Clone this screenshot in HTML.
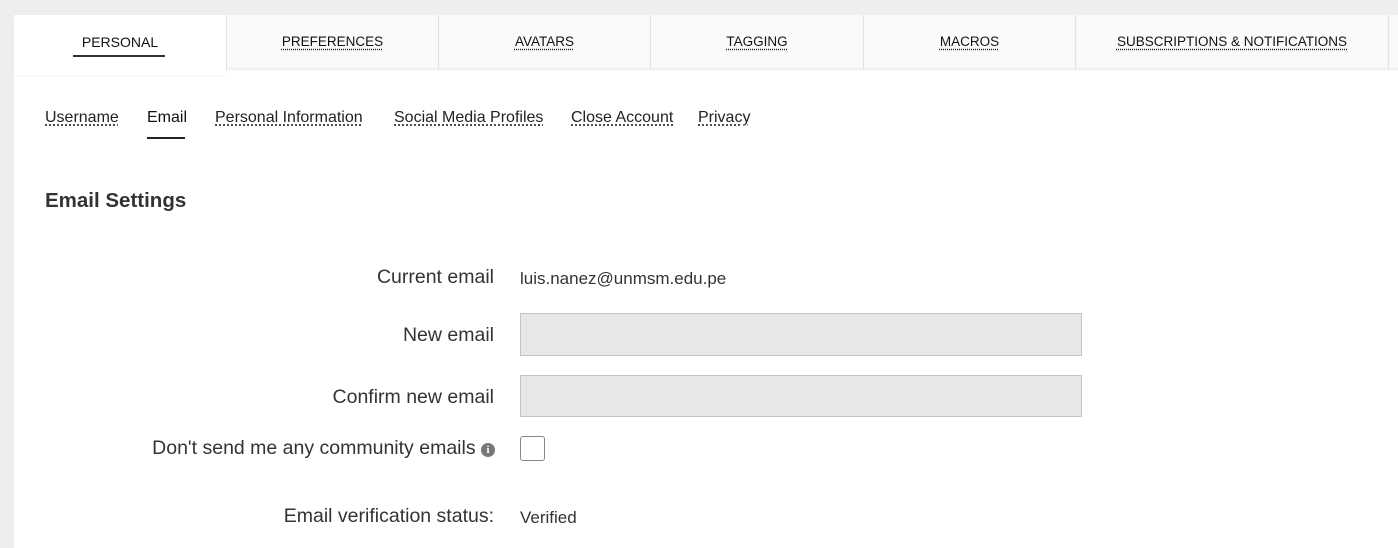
<!DOCTYPE html>
<html><head><style>
body{margin:0;width:1398px;height:548px;background:#efeeee;font-family:"Liberation Sans",sans-serif;position:relative;overflow:hidden;color:#333}
.a{position:absolute}
.tab{position:absolute;top:15px;height:55px;background:#fafafa;border-left:1px solid #e2e2e2;box-sizing:border-box;text-align:center;line-height:54px;font-size:13.5px;color:#111;box-shadow:inset 0 -3px 3px -2px #e6e6e6}
.tab span{text-decoration:underline dotted;text-underline-offset:3px}
.panel{position:absolute;left:14px;top:70px;width:1384px;height:478px;background:#fff}
.sub{position:absolute;top:109px;font-size:16px;color:#222;text-decoration:underline dotted;text-underline-offset:3px}
.lbl{position:absolute;right:904px;font-size:19.5px;color:#333;text-align:right;white-space:nowrap}
.inp{position:absolute;left:520px;width:562px;background:#e7e7e7;border:1px solid #c4c4c4;box-sizing:border-box}
</style></head><body>
<div class="panel"></div>
<div class="a" style="left:14px;top:15px;width:212px;height:60px;background:#fff;box-shadow:0 1px 3px rgba(0,0,0,.05)"></div>
<div class="a" style="left:14px;top:15px;width:212px;line-height:54px;text-align:center;font-size:14px;color:#111">PERSONAL</div>
<div class="a" style="left:73px;top:55px;width:92px;height:2px;background:#333"></div>
<div class="tab" style="left:226px;width:212px"><span>PREFERENCES</span></div>
<div class="tab" style="left:438px;width:212px"><span>AVATARS</span></div>
<div class="tab" style="left:650px;width:213px"><span>TAGGING</span></div>
<div class="tab" style="left:863px;width:212px"><span>MACROS</span></div>
<div class="tab" style="left:1075px;width:313px"><span>SUBSCRIPTIONS &amp; NOTIFICATIONS</span></div>
<div class="tab" style="left:1388px;width:20px"></div>
<div class="sub" style="left:45px">Username</div>
<div class="a" style="left:147px;top:109px;font-size:16px;color:#111">Email</div>
<div class="a" style="left:147px;top:137px;width:38px;height:2px;background:#222"></div>
<div class="sub" style="left:215px">Personal Information</div>
<div class="sub" style="left:394px">Social Media Profiles</div>
<div class="sub" style="left:571px">Close Account</div>
<div class="sub" style="left:698px">Privacy</div>
<div class="a" style="left:45px;top:189px;font-size:20.5px;font-weight:bold;color:#333">Email Settings</div>
<div class="lbl" style="top:266px">Current email</div>
<div class="a" style="left:520px;top:269px;font-size:17px;color:#333">luis.nanez@unmsm.edu.pe</div>
<div class="lbl" style="top:324px">New email</div>
<div class="inp" style="top:313px;height:43px"></div>
<div class="lbl" style="top:386px">Confirm new email</div>
<div class="inp" style="top:375px;height:42px"></div>
<div class="lbl" style="top:437px;right:903px">Don't send me any community emails <span style="display:inline-block;width:14px;height:14px;border-radius:50%;background:#777;color:#fff;font-size:11px;font-weight:bold;line-height:14px;text-align:center;font-family:'Liberation Serif',serif;vertical-align:1px">i</span></div>
<div class="a" style="left:520px;top:436px;width:23px;height:23px;border:1px solid #888;border-radius:3px"></div>
<div class="lbl" style="top:505px">Email verification status:</div>
<div class="a" style="left:520px;top:508px;font-size:17px;color:#333">Verified</div>
</body></html>
